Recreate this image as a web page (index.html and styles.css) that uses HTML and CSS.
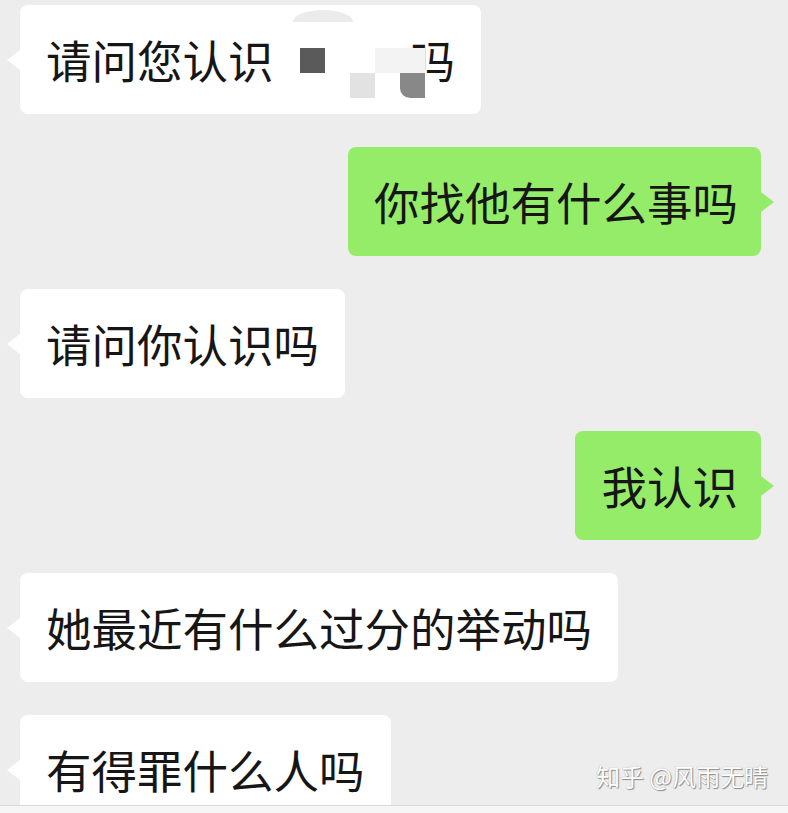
FILE: index.html
```html
<!DOCTYPE html>
<html lang="zh-CN">
  <head>
    <meta charset="UTF-8" />
    <meta name="viewport" content="width=device-width, initial-scale=1.0" />
    <title>聊天记录</title>
    <link rel="stylesheet" href="styles.css">
  </head>
  <body>
    <div class="chat">
      <div class="msg left masked">
        请问您认识<span class="hidden-name"></span>吗
        <div class="mosaic">
          <div class="cap"></div>
          <div class="cells">
            <span class="c dark"></span>
            <span class="c"></span>
            <span class="c"></span>
            <span class="c pale"></span>
            <span class="c pale"></span>
            <span class="c"></span>
            <span class="c"></span>
            <span class="c light"></span>
            <span class="c"></span>
            <span class="c mid"></span>
          </div>
        </div>
      </div>
      <div class="msg right">你找他有什么事吗</div>
      <div class="msg left">请问你认识吗</div>
      <div class="msg right">我认识</div>
      <div class="msg left">她最近有什么过分的举动吗</div>
      <div class="msg left">有得罪什么人吗</div>
    </div>

    <div class="input-bar"></div>

    <div class="watermark">知乎 @风雨无晴</div>
  </body>
</html>
```

FILE: styles.css
```css
body {
  margin: 0;
  padding: 0;
  background-color: #ededed;
  font-family: "Noto Sans CJK SC", "Noto Sans", sans-serif;
  color: #161616;
  width: 788px;
  height: 813px;
  overflow: hidden;
  position: relative;
}

.chat {
  display: flex;
  flex-direction: column;
  gap: 33px;
  padding: 5px 27px 0 20px;
  height: 800px;
  overflow: hidden;
}

.msg {
  position: relative;
  font-size: 45.5px;
  line-height: 55px;
  padding: 27px 26px;
  border-radius: 8px;
  white-space: nowrap;
  flex-shrink: 0;
}

.msg.left {
  align-self: flex-start;
  background-color: #ffffff;
}

.msg.right {
  align-self: flex-end;
  background-color: #95ec69;
  padding: 27px 23px 27px 26px;
}

.msg.left::before,
.msg.right::after {
  content: "";
  position: absolute;
  top: 45px;
  border-top: 10px solid transparent;
  border-bottom: 10px solid transparent;
}

.msg.left::before {
  left: -13px;
  border-right: 13px solid #ffffff;
}

.msg.right::after {
  right: -13px;
  border-left: 13px solid #95ec69;
}

.hidden-name {
  display: inline-block;
  width: 136px;
}

.mosaic {
  position: absolute;
  left: 253px;
  top: 5px;
}

.cap {
  width: 60px;
  height: 12px;
  margin-left: 20px;
  background-color: #ebebeb;
  border-radius: 30px 30px 0 0 / 12px 12px 0 0;
}

.cells {
  display: grid;
  grid-template-columns: repeat(5, 25px);
  grid-template-rows: repeat(2, 25px);
  margin: 26px 0 0 27px;
}

.c.dark {
  background-color: #5a5a5a;
}

.c.pale {
  background-color: #f3f3f3;
}

.c.light {
  background-color: #e2e2e2;
}

.c.mid {
  background-color: #888888;
  border-radius: 0 0 0 10px;
}

.input-bar {
  height: 13px;
  border-top: 1px solid #d8d8d8;
  background-color: #f6f6f6;
}

.watermark {
  position: absolute;
  right: 20px;
  bottom: 20px;
  font-size: 24px;
  color: #ffffff;
  text-shadow: 1px 1px 1px #8a8a8a, 0 0 1px #9a9a9a;
}
```
